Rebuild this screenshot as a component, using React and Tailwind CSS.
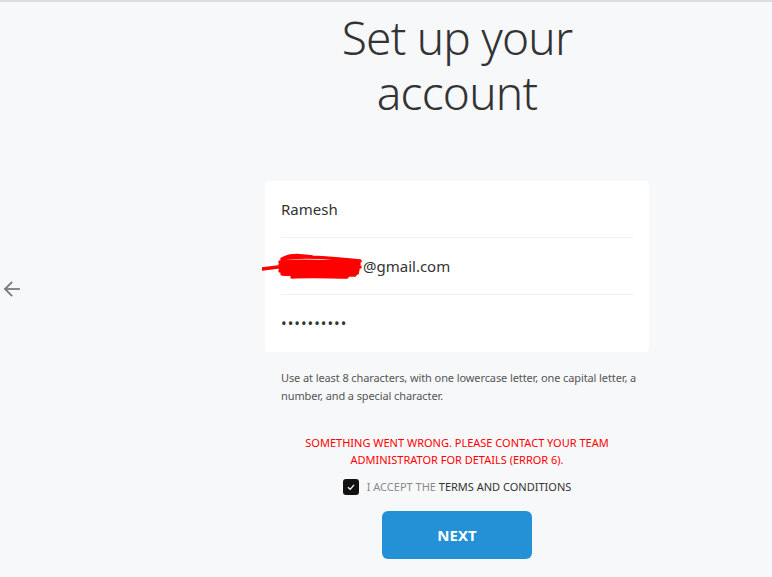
import React from "react";

function BackArrow() {
  return (
    <svg width="20" height="20" viewBox="0 0 20 20" fill="none" stroke="#7a7a7a" strokeWidth="1.8" strokeLinecap="square">
      <path d="M17 10H3.5" />
      <path d="M9.5 3.5L3 10l6.5 6.5" />
    </svg>
  );
}

function Scribble() {
  return (
    <svg width="100" height="32" viewBox="0 0 100 32" className="absolute left-[-19px] top-[-6px]">
      <path
        d="M0 19 L40 14 M20 9 C40 5 70 8 98 11 M18 12 C45 10 75 12 97 14 M18 15 C45 14 75 15 98 17 M18 18 C45 17 75 18 96 20 M18 21 C45 20 75 21 95 23 M20 24 C45 23 70 24 93 25 M30 27 C50 26 70 27 85 27 M22 8 C30 4 45 6 50 7"
        stroke="#ff0000"
        strokeWidth="3.5"
        fill="none"
        strokeLinecap="round"
      />
      <path d="M19 10 L96 10 L97 24 L22 26 Z" fill="#ff0000" />
    </svg>
  );
}

export default function App() {
  return (
    <div
      className="h-[577px] w-[772px] overflow-hidden border-t-2 border-[#dcdddf] bg-[#f7f8fa] text-[#333]"
      style={{ fontFamily: '"Segoe UI", "Noto Sans", sans-serif' }}
    >
      <div className="flex h-full">
        <div className="flex w-[142px] items-center pl-[2px] pb-[2px]">
          <BackArrow />
        </div>
        <div className="flex flex-1 flex-col items-center">
          <h1 className="mt-[8px] text-center text-[46px] font-light leading-[55px] tracking-[-0.8px] text-[#333]">
            Set up your
            <br />
            account
          </h1>
          <div className="mt-[61px] w-[384px] rounded-[4px] bg-white px-[16px]">
            <div className="flex h-[57px] items-center border-b border-[#f0f0f0] text-[15px]">Ramesh</div>
            <div className="flex h-[57px] items-center border-b border-[#f0f0f0] text-[15px]">
              <span className="relative inline-block h-[20px] w-[82px]">
                <Scribble />
              </span>
              <span>@gmail.com</span>
            </div>
            <div className="flex h-[57px] items-center text-[15px] tracking-[1px]">••••••••••</div>
          </div>
          <p className="mt-[17px] w-[384px] pl-[16px] pr-[4px] text-[11px] leading-[18px] tracking-[-0.1px] text-[#555]">
            Use at least 8 characters, with one lowercase letter, one capital letter, a number, and a special character.
          </p>
          <p className="mt-[29px] w-[330px] text-center text-[11px] leading-[17px] text-[#ff0000]">
            SOMETHING WENT WRONG. PLEASE CONTACT YOUR TEAM ADMINISTRATOR FOR DETAILS (ERROR 6).
          </p>
          <div className="mt-[11px] flex items-center gap-[8px]">
            <div className="flex h-[16px] w-[16px] items-center justify-center rounded-[3px] bg-[#111]">
              <svg width="10" height="10" viewBox="0 0 10 10" fill="none" stroke="white" strokeWidth="1.3">
                <path d="M2 5.2 L4.2 7.3 L8 2.8" />
              </svg>
            </div>
            <span className="text-[11px] leading-[16px]">
              <span className="text-[#8a8a8a]">I ACCEPT THE </span>
              <span className="text-[#333]">TERMS AND CONDITIONS</span>
            </span>
          </div>
          <button className="mt-[16px] flex h-[48px] w-[150px] items-center justify-center rounded-[6px] bg-[#2490d6] text-[15px] font-bold text-white">
            NEXT
          </button>
        </div>
      </div>
    </div>
  );
}
